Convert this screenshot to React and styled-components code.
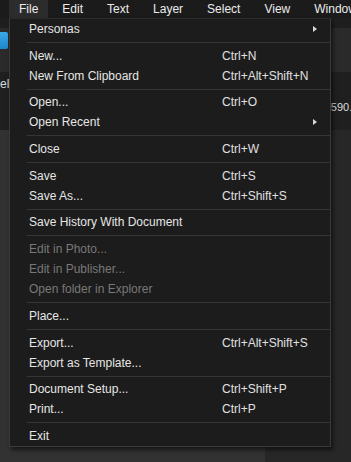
import styled, { createGlobalStyle } from "styled-components";

const GlobalStyle = createGlobalStyle`
  html, body {
    margin: 0;
    padding: 0;
    background: #1b1b1b;
  }
  * {
    box-sizing: border-box;
  }
`;

const Screen = styled.div`
  position: relative;
  width: 351px;
  height: 462px;
  overflow: hidden;
  display: flex;
  flex-direction: column;
  font-family: "Liberation Sans", Arial, sans-serif;
  font-size: 12px;
  color: #e6e6e6;
`;

const MenuBar = styled.div`
  height: 18px;
  flex: none;
  display: flex;
  align-items: stretch;
  gap: 4px;
  padding-left: 9px;
  background: #1b1b1b;
  white-space: nowrap;
`;

const MenuTitle = styled.div`
  display: flex;
  align-items: center;
  padding: 0 10px;
  font-size: 12px;
  color: #ececec;
  background: ${(p) => (p.$active ? "#2c2c2c" : "transparent")};
`;

const TopStrip = styled.div`
  height: 10px;
  flex: none;
  background: #1e1e1e;
`;

const ToolRow = styled.div`
  height: 44px;
  flex: none;
  display: flex;
  align-items: flex-start;
  padding-top: 4px;
  background: #2a2a2a;
`;

const ToolButton = styled.div`
  width: 8px;
  height: 17px;
  border-radius: 0 2px 2px 0;
  background: linear-gradient(#3aa8e6, #1f88cc);
`;

const ContextRow = styled.div`
  height: 58px;
  flex: none;
  display: flex;
  justify-content: space-between;
  align-items: flex-start;
  background: #1f1f1f;
  white-space: nowrap;
`;

const ContextLabel = styled.span`
  margin-top: 5px;
  margin-left: -8px;
  color: #dcdcdc;
`;

const ContextField = styled.span`
  margin-top: 29px;
  margin-right: -22px;
  font-size: 11px;
  color: #dcdcdc;
`;

const Main = styled.div`
  flex: 1;
  display: flex;
`;

const Canvas = styled.div`
  flex: 1;
  background: #323232;
`;

const SidePanel = styled.div`
  width: 86px;
  background: #272727;
`;

const Dropdown = styled.div`
  position: absolute;
  top: 18px;
  left: 9px;
  width: 322px;
  background: #1c1c1c;
  border: 1px solid #3a3a3a;
  border-top-color: #2a2a2a;
  box-shadow: 2px 3px 4px rgba(0, 0, 0, 0.55);
  display: flex;
  flex-direction: column;
`;

const Item = styled.div`
  height: 20px;
  display: grid;
  grid-template-columns: 193px 1fr 17px;
  align-items: center;
  padding-left: 19px;
  color: ${(p) => (p.$disabled ? "#787878" : "#e6e6e6")};
  white-space: nowrap;
`;

const Shortcut = styled.span`
  color: #e0e0e0;
`;

const Arrow = styled.span`
  width: 0;
  height: 0;
  border-top: 3.5px solid transparent;
  border-bottom: 3.5px solid transparent;
  border-left: 4px solid #d8d8d8;
  justify-self: start;
`;

const Separator = styled.div`
  height: 1px;
  margin: 3px 0 2.7px 17px;
  background: #353535;
`;

const menu = [
  { label: "Personas", sub: true },
  "-",
  { label: "New...", key: "Ctrl+N" },
  { label: "New From Clipboard", key: "Ctrl+Alt+Shift+N" },
  "-",
  { label: "Open...", key: "Ctrl+O" },
  { label: "Open Recent", sub: true },
  "-",
  { label: "Close", key: "Ctrl+W" },
  "-",
  { label: "Save", key: "Ctrl+S" },
  { label: "Save As...", key: "Ctrl+Shift+S" },
  "-",
  { label: "Save History With Document" },
  "-",
  { label: "Edit in Photo...", disabled: true },
  { label: "Edit in Publisher...", disabled: true },
  { label: "Open folder in Explorer", disabled: true },
  "-",
  { label: "Place..." },
  "-",
  { label: "Export...", key: "Ctrl+Alt+Shift+S" },
  { label: "Export as Template..." },
  "-",
  { label: "Document Setup...", key: "Ctrl+Shift+P" },
  { label: "Print...", key: "Ctrl+P" },
  "-",
  { label: "Exit" },
];

const titles = ["File", "Edit", "Text", "Layer", "Select", "View", "Window"];

const App = () => {
  return (
    <Screen>
      <GlobalStyle />
      <MenuBar>
        {titles.map((t, i) => (
          <MenuTitle key={t} $active={i === 0}>
            {t}
          </MenuTitle>
        ))}
      </MenuBar>
      <TopStrip />
      <ToolRow>
        <ToolButton />
      </ToolRow>
      <ContextRow>
        <ContextLabel>Select</ContextLabel>
        <ContextField>590.4 px</ContextField>
      </ContextRow>
      <Main>
        <Canvas />
        <SidePanel />
      </Main>

      <Dropdown>
        {menu.map((m, i) =>
          m === "-" ? (
            <Separator key={i} />
          ) : (
            <Item key={i} $disabled={m.disabled}>
              <span>{m.label}</span>
              <Shortcut>{m.key || ""}</Shortcut>
              {m.sub ? <Arrow /> : <span />}
            </Item>
          )
        )}
      </Dropdown>
    </Screen>
  );
};

export default App;
